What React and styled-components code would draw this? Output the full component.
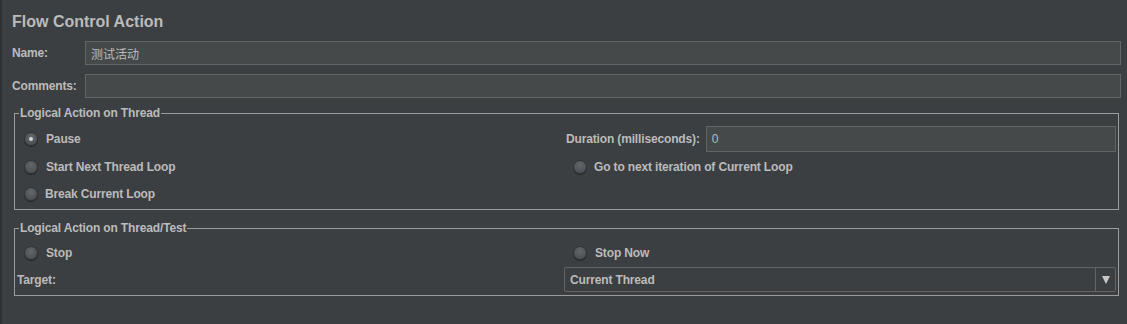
import React from 'react'
import styled, { createGlobalStyle } from 'styled-components'

const GlobalStyle = createGlobalStyle`
  html, body {
    margin: 0;
    padding: 0;
    background: #3c3f41;
  }
  body {
    font-family: "Liberation Sans", Arial, sans-serif;
    color: #bbbbbb;
  }
`

const Page = styled.div`
  width: 1127px;
  height: 324px;
  box-sizing: border-box;
  border-left: 2px solid #2f3133;
  padding: 12px 6px 0 10px;
  overflow: hidden;
`

const Title = styled.h1`
  margin: 0;
  font-size: 16px;
  line-height: 20px;
  font-weight: bold;
  color: #bbbbbb;
`

const FieldRow = styled.div`
  display: grid;
  grid-template-columns: 73px 1fr;
  align-items: center;
  margin-top: ${p => p.$top}px;
`

const Label = styled.label`
  font-size: 12px;
  letter-spacing: -0.15px;
  font-weight: bold;
  color: #bbbbbb;
  white-space: nowrap;
  padding-left: ${p => p.$indent || 0}px;
`

const TextInput = styled.div`
  height: ${p => p.$h || 24}px;
  box-sizing: border-box;
  background: #45494a;
  border: 1px solid #646464;
  display: flex;
  align-items: center;
  padding-left: 5px;
  font-size: 12px;
  color: #bbbbbb;
`

const CjkText = styled.span`
  font-family: "Noto Sans CJK SC", sans-serif;
  font-size: 12px;
`

const Group = styled.fieldset`
  margin: ${p => p.$top}px 2px 0 2px;
  padding: ${p => p.$pt}px 2px ${p => p.$bottom}px 0;
  border: 1px solid #9b9b9b;
  display: grid;
  grid-template-columns: 548px 1fr;
  min-width: 0;
`

const Legend = styled.legend`
  margin-left: 4px;
  padding: 0 1px 0 1px;
  font-size: 12px;
  letter-spacing: -0.15px;
  line-height: 14px;
  font-weight: bold;
  color: #bbbbbb;
`

const Cell = styled.div`
  height: ${p => p.$h || 28}px;
  display: flex;
  align-items: center;
  padding-left: ${p => p.$indent || 0}px;
  min-width: 0;
`

const RadioDot = styled.span`
  width: 14px;
  height: 14px;
  border-radius: 50%;
  box-sizing: border-box;
  border: 1px solid #323436;
  background: radial-gradient(circle at 50% 35%, #63676a 0%, #52565a 55%, #474a4c 100%);
  box-shadow: 0 1px 0 rgba(0, 0, 0, 0.4);
  display: flex;
  align-items: center;
  justify-content: center;
  flex-shrink: 0;
  &::after {
    content: '';
    width: 4px;
    height: 4px;
    border-radius: 50%;
    background: #d4d4d4;
    display: ${p => (p.$checked ? 'block' : 'none')};
  }
`

const RadioText = styled.span`
  font-size: 12px;
  letter-spacing: -0.15px;
  font-weight: bold;
  color: #bbbbbb;
  white-space: nowrap;
`

const Radio = ({ label, checked, gap = 8 }) => (
  <>
    <RadioDot $checked={checked} />
    <RadioText style={{ marginLeft: gap }}>{label}</RadioText>
  </>
)

const DurationInput = styled(TextInput)`
  flex: 1;
  margin-left: 6px;
`

const Select = styled.div`
  flex: 1;
  height: 25px;
  box-sizing: border-box;
  border: 1px solid #646464;
  border-radius: 2px;
  display: flex;
  align-items: stretch;
  background: #3c3f41;
`

const SelectValue = styled.div`
  flex: 1;
  display: flex;
  align-items: center;
  padding-left: 5px;
  font-size: 12px;
  letter-spacing: -0.15px;
  font-weight: bold;
  color: #bbbbbb;
`

const SelectArrow = styled.div`
  width: 19px;
  border-left: 1px solid #646464;
  display: flex;
  align-items: center;
  justify-content: center;
  &::after {
    content: '';
    border-left: 4px solid transparent;
    border-right: 4px solid transparent;
    border-top: 8px solid #c8c8c8;
    margin-top: 1px;
  }
`

export default function App() {
  return (
    <>
      <GlobalStyle />
      <Page>
        <Title>Flow Control Action</Title>
        <FieldRow $top={9}>
          <Label>Name:</Label>
          <TextInput><CjkText>测试活动</CjkText></TextInput>
        </FieldRow>
        <FieldRow $top={9}>
          <Label>Comments:</Label>
          <TextInput />
        </FieldRow>

        <Group $top={8} $pt={5} $bottom={1}>
          <Legend>Logical Action on Thread</Legend>
          <Cell $indent={9}><Radio label="Pause" checked gap={8} /></Cell>
          <Cell $indent={3}>
            <Label>Duration (milliseconds):</Label>
            <DurationInput $h={26}>0</DurationInput>
          </Cell>
          <Cell $h={27} $indent={9}><Radio label="Start Next Thread Loop" gap={8} /></Cell>
          <Cell $h={27} $indent={10}><Radio label="Go to next iteration of Current Loop" gap={7} /></Cell>
          <Cell $indent={9}><Radio label="Break Current Loop" gap={7} /></Cell>
          <Cell />
        </Group>

        <Group $top={11} $pt={4} $bottom={3}>
          <Legend>Logical Action on Thread/Test</Legend>
          <Cell $indent={9}><Radio label="Stop" gap={8} /></Cell>
          <Cell $indent={10}><Radio label="Stop Now" gap={8} /></Cell>
          <Cell $h={25} $indent={2}><Label>Target:</Label></Cell>
          <Cell $h={25} $indent={1}>
            <Select>
              <SelectValue>Current Thread</SelectValue>
              <SelectArrow />
            </Select>
          </Cell>
        </Group>
      </Page>
    </>
  )
}
